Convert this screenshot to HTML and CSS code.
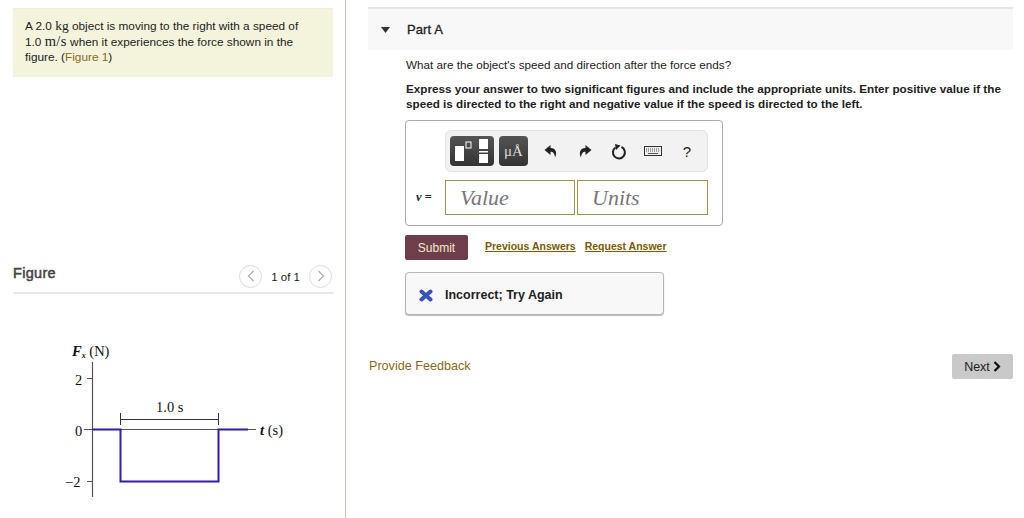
FILE: index.html
```html
<!DOCTYPE html>
<html lang="en">
<head>
<meta charset="utf-8">
<title>Part A</title>
<link rel="stylesheet" href="styles.css">
</head>
<body>
<div class="page">
  <aside class="left">
    <div class="problem">A 2.0 <span class="unit">kg</span> object is moving to the right with a speed of 1.0 <span class="unit unit-wide">m/s</span> when it experiences the force shown in the figure. (<a class="gold">Figure 1</a>)</div>
    <div class="fig-head">
      <h2 class="fig-title">Figure</h2>
      <div class="pager">
        <span class="circle"><svg width="8" height="12" viewBox="0 0 8 12"><path d="M6.500 1 1.500 6l5 5" fill="none" stroke="#aaa" stroke-width="1.200"/></svg></span>
        <span class="count">1 of 1</span>
        <span class="circle"><svg width="8" height="12" viewBox="0 0 8 12"><path d="M1.500 1l5 5-5 5" fill="none" stroke="#aaa" stroke-width="1.200"/></svg></span>
      </div>
    </div>
    <svg class="graph" width="320" height="200" viewBox="13 318 320 200">
      <g fill="none" stroke="#555" stroke-width="1.200">
        <path d="M92.500 363V498M84 430.500H256M87 379.500H92M87 482.500H92"/>
      </g>
      <g fill="none" stroke="#333" stroke-width="1">
        <path d="M120 420.500H218M120.500 414V426M218.500 414V426"/>
      </g>
      <path d="M92 430.500H120.500V482.500H218.500V430.500H248" fill="none" stroke="#3517bb" stroke-width="2"/>
      <g class="gt">
        <text x="72" y="357"><tspan class="gi">F</tspan><tspan class="gs" dy="2">x</tspan><tspan dy="-2"> (N)</tspan></text>
        <text x="75" y="386">2</text>
        <text x="75" y="437">0</text>
        <text x="65" y="488">−2</text>
        <text x="156" y="413">1.0 s</text>
        <text x="260" y="436"><tspan class="gi">t</tspan> (s)</text>
      </g>
    </svg>
  </aside>
  <main class="right">
    <header class="part">
      <svg class="caret" width="9" height="6" viewBox="0 0 9 6"><path d="M0 0H9L4.500 6Z" fill="#333"/></svg>
      <h1 class="part-title">Part A</h1>
    </header>
    <section class="body">
      <p class="q">What are the object's speed and direction after the force ends?</p>
      <p class="ins">Express your answer to two significant figures and include the appropriate units. Enter positive value if the speed is directed to the right and negative value if the speed is directed to the left.</p>
      <div class="answer">
        <div class="toolbar">
          <button class="tool t-tpl">
            <svg width="34" height="24" viewBox="0 0 34 24">
              <rect x="0" y="7" width="9" height="15" fill="#fff"/>
              <rect x="11" y="3" width="5" height="6" fill="none" stroke="#fff"/>
              <rect x="24" y="0" width="9" height="10" fill="#fff"/>
              <rect x="24" y="12" width="9" height="1.500" fill="#fff"/>
              <rect x="24" y="15" width="9" height="9" fill="#fff"/>
            </svg>
          </button>
          <button class="tool t-mu">μÅ</button>
          <span class="act"><svg width="14" height="15" viewBox="0 0 14 15"><path d="M6.500 1 .5 6 6.500 11V7.800c2.500 0 4 1.200 4.500 5.700 2.500-5 .8-9.300-4.500-9.500Z" fill="#222"/></svg></span>
          <span class="act"><svg width="14" height="15" viewBox="0 0 14 15"><path d="M7.500 1l6 5-6 5V7.800c-2.500 0-4 1.200-4.500 5.700C.5 8.500 2.200 4.200 7.500 4Z" fill="#222"/></svg></span>
          <span class="act"><svg width="16" height="17" viewBox="0 0 16 17"><path d="M4.500 4.500A6 6 0 1 0 10.500 4" fill="none" stroke="#222" stroke-width="2"/><path d="M4 1 9.500 2.500 5 7Z" fill="#222"/></svg></span>
          <span class="act"><svg width="18" height="10" viewBox="0 0 18 10"><rect x=".5" y=".5" width="17" height="9" fill="#eee" stroke="#333"/><path d="M2 3H16M2 5H16" stroke="#555" stroke-dasharray="1 1"/><path d="M4 7.500H14" stroke="#555"/></svg></span>
          <span class="act help">?</span>
        </div>
        <div class="entry">
          <span class="var"><i>v</i> =</span>
          <div class="field">Value</div>
          <div class="field">Units</div>
        </div>
      </div>
      <div class="actions">
        <button class="submit">Submit</button>
        <a class="link">Previous Answers</a>
        <a class="link">Request Answer</a>
      </div>
      <div class="feedback">
        <svg width="14" height="13" viewBox="0 0 14 13"><path d="M2.500 2.500 11.500 10.500M11.500 2.500 2.500 10.500" stroke="#3350c4" stroke-width="4" stroke-linecap="round"/></svg>
        <span>Incorrect; Try Again</span>
      </div>
    </section>
    <div class="foot">
      <a class="gold feedback-link">Provide Feedback</a>
      <button class="next">Next<svg width="8" height="11" viewBox="0 0 8 11"><path d="M1.500 1 6 5.500 1.500 10" fill="none" stroke="#111" stroke-width="2.200"/></svg></button>
    </div>
  </main>
</div>
</body>
</html>
```
FILE: styles.css
```css
* { box-sizing: border-box; }
html, body { margin: 0; height: 100%; background: #fff; overflow: hidden; }
body { font: 12px/15px "Liberation Sans", Arial, sans-serif; color: #222; }
p, h1, h2 { margin: 0; }
button { font-family: inherit; border: 0; padding: 0; }

.page { display: flex; height: 518px; }
.left { width: 346px; flex: none; border-right: 1px solid #cbc6bb; padding: 8px 12px 0 13px; }
.problem { height: 69px; padding: 10px 30px 0 12px; background: #f4f4dd; border-top: 1px solid #ecece0; font-size: 11.800px; line-height: 15px; }
.unit { font-family: "Liberation Serif", serif; font-size: 13.500px; line-height: 1; }
.unit-wide { font-size: 14.500px; letter-spacing: .4px; }
.gold { color: #8a6a14; }

.fig-head { display: flex; justify-content: space-between; align-items: center; height: 41px; margin-top: 176px; border-bottom: 2px solid #e8e8e8; padding-top: 7px; }
.fig-title { font-size: 14.500px; font-weight: 400; color: #444; letter-spacing: .3px; -webkit-text-stroke: .5px #444; margin-top: -6px; }
.pager { display: flex; align-items: center; gap: 9px; padding-right: 1px; }
.circle { width: 23px; height: 23px; border: 1px solid #ddd; border-radius: 50%; display: flex; align-items: center; justify-content: center; }
.count { font-size: 11.500px; margin-top: 2px; }
.graph { display: block; margin-top: 23px; }
.gt text { font: 14.500px "Liberation Serif", serif; fill: #111; }
.gt .gi { font-style: italic; font-weight: 700; }
.gt .gs { font-size: 8px; font-style: italic; font-weight: 700; }

.right { width: 645px; margin-left: 22px; padding-top: 7px; }
.part { display: flex; align-items: center; height: 43px; background: #f8f8f8; border-top: 2px solid #e6e6e6; padding-left: 13px; gap: 17px; }
.caret { flex: none; }
.part-title { font-size: 13px; font-weight: 400; letter-spacing: .1px; -webkit-text-stroke: .3px #222; }
.body { padding-left: 37px; }
.q { margin-top: 7px; padding-left: 1px; font-size: 11.700px; }
.ins { margin-top: 10px; padding-left: 1px; font-weight: 700; font-size: 11.700px; line-height: 14.500px; }
.answer { width: 318px; height: 106px; margin-top: 9px; border: 1px solid #aaa; border-radius: 4px; padding: 9px 14px 0 39px; }
.toolbar { display: flex; align-items: center; height: 42px; padding-left: 4px; background: #f2f2f2; border: 1px solid #e2e2e2; border-radius: 6px; }
.tool { height: 30px; border-radius: 4px; background: linear-gradient(#555, #333); color: #ddd; display: flex; align-items: center; justify-content: center; }
.t-tpl { width: 44px; }
.t-mu { width: 29px; margin-left: 5px; margin-right: 6px; font: 15px "Liberation Serif", serif; }
.act { width: 34px; display: flex; justify-content: center; align-items: center; }
.help { font-size: 15px; color: #222; }
.entry { display: flex; align-items: center; margin-top: 8px; margin-left: -29px; }
.var { width: 29px; font: 700 12.500px/14px "Liberation Serif", serif; margin-top: -2px; }
.field { width: 130px; height: 35px; margin-right: 2px; border: 1px solid #a8924a; padding-left: 14px; font: italic 22px/33px "Liberation Serif", serif; color: #777; }
.field:last-child { margin-right: 0; width: 131px; }
.actions { display: flex; align-items: center; margin-top: 9px; height: 25px; }
.submit { width: 63px; height: 25px; border-radius: 2px; background: #6e3f4b; color: #f3e9cf; font-size: 12px; margin-right: 17px; }
.link { color: #7a5c00; font-weight: 700; font-size: 10.500px; text-decoration: underline; margin-right: 9px; margin-top: -3px; }
.feedback { display: flex; align-items: center; gap: 12px; width: 259px; height: 43px; margin-top: 12px; padding: 3px 0 0 13px; background: #f8f8f8; border: 1px solid #b5b5b5; border-radius: 4px; box-shadow: 0 1px 1px #bbb; font-weight: 700; font-size: 12.500px; }
.foot { display: flex; justify-content: space-between; align-items: center; margin-top: 39px; padding-left: 1px; }
.feedback-link { font-size: 12.600px; }
.next { display: flex; align-items: center; justify-content: center; gap: 3px; width: 61px; height: 25px; background: #c9c9c9; border-radius: 2px; font-size: 12.500px; color: #222; }
```
